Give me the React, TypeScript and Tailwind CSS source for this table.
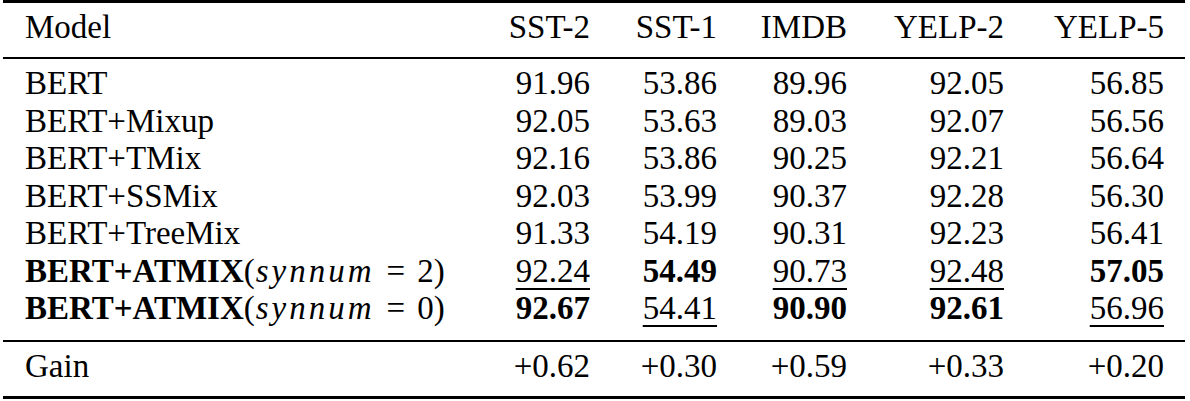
import React from "react";

type Cell = { v: string; b?: boolean; u?: boolean };

const rows: { name: React.ReactNode; cells: Cell[] }[] = [
  { name: "BERT", cells: [{ v: "91.96" }, { v: "53.86" }, { v: "89.96" }, { v: "92.05" }, { v: "56.85" }] },
  { name: "BERT+Mixup", cells: [{ v: "92.05" }, { v: "53.63" }, { v: "89.03" }, { v: "92.07" }, { v: "56.56" }] },
  { name: "BERT+TMix", cells: [{ v: "92.16" }, { v: "53.86" }, { v: "90.25" }, { v: "92.21" }, { v: "56.64" }] },
  { name: "BERT+SSMix", cells: [{ v: "92.03" }, { v: "53.99" }, { v: "90.37" }, { v: "92.28" }, { v: "56.30" }] },
  { name: "BERT+TreeMix", cells: [{ v: "91.33" }, { v: "54.19" }, { v: "90.31" }, { v: "92.23" }, { v: "56.41" }] },
];

const atmixRows: { n: string; cells: Cell[] }[] = [
  {
    n: "2",
    cells: [
      { v: "92.24", u: true },
      { v: "54.49", b: true },
      { v: "90.73", u: true },
      { v: "92.48", u: true },
      { v: "57.05", b: true },
    ],
  },
  {
    n: "0",
    cells: [
      { v: "92.67", b: true },
      { v: "54.41", u: true },
      { v: "90.90", b: true },
      { v: "92.61", b: true },
      { v: "56.96", u: true },
    ],
  },
];

const gridCls =
  "grid grid-cols-[475px_90px_127px_130px_157px_160px] h-[37.5px] leading-[37.5px] whitespace-nowrap";

function Num({ c }: { c: Cell }) {
  return (
    <div className="text-right">
      <span
        className={
          (c.b ? "font-bold " : "") +
          (c.u ? "underline decoration-[1.5px] underline-offset-[6px] " : "")
        }
      >
        {c.v}
      </span>
    </div>
  );
}

function AtmixName({ n }: { n: string }) {
  return (
    <div className="flex items-baseline">
      <span className="font-bold">BERT+ATMIX</span>
      <span>(</span>
      <span className="italic tracking-[3px] pl-[1px]">synnum</span>
      <span className="mx-[12px]">=</span>
      <span>{n}</span>
      <span>)</span>
    </div>
  );
}

export default function App() {
  return (
    <div className="w-[1190px] h-[401px] bg-white text-black font-['Liberation_Serif'] text-[33px]">
      <div className="ml-[3px] w-[1182px]">
        <div className="h-[3px] bg-black" />
        <div className="pt-[6px] pb-[10.5px] px-[22px]">
          <div className={gridCls}>
            <div>Model</div>
            <div className="text-right">SST-2</div>
            <div className="text-right">SST-1</div>
            <div className="text-right">IMDB</div>
            <div className="text-right">YELP-2</div>
            <div className="text-right">YELP-5</div>
          </div>
        </div>
        <div className="h-[2px] bg-black" />
        <div className="pt-[6px] pb-[12.5px] px-[22px]">
          {rows.map((r, i) => (
            <div key={i} className={gridCls}>
              <div>{r.name}</div>
              {r.cells.map((c, j) => (
                <Num key={j} c={c} />
              ))}
            </div>
          ))}
          {atmixRows.map((r, i) => (
            <div key={"a" + i} className={gridCls}>
              <AtmixName n={r.n} />
              {r.cells.map((c, j) => (
                <Num key={j} c={c} />
              ))}
            </div>
          ))}
        </div>
        <div className="h-[2px] bg-black" />
        <div className="pt-[6px] pb-[10.5px] px-[22px]">
          <div className={gridCls}>
            <div>Gain</div>
            <div className="text-right">+0.62</div>
            <div className="text-right">+0.30</div>
            <div className="text-right">+0.59</div>
            <div className="text-right">+0.33</div>
            <div className="text-right">+0.20</div>
          </div>
        </div>
        <div className="h-[3px] bg-black" />
      </div>
    </div>
  );
}
